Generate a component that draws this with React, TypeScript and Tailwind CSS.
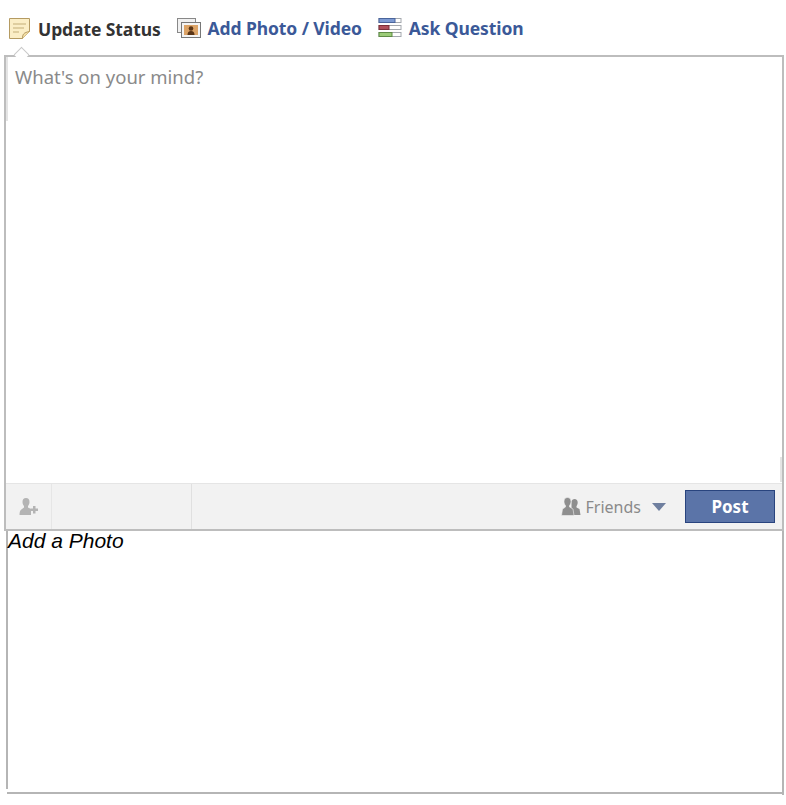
import React from 'react';

const NoteIcon = () => (
  <svg width="23" height="23" viewBox="0 0 23 23">
    <path d="M1.500 1.500h20v13l-7 7h-13z" fill="#fbeec6" stroke="#b59b62" />
    <path d="M14.500 21.500c0-4 1-6 7-7" fill="#f3dfa6" stroke="#b59b62" />
    <path d="M5 7h13M5 11h11M5 15h6" stroke="#c4ad78" strokeWidth="1.200" />
  </svg>
);

const PhotoIcon = () => (
  <svg width="26" height="22" viewBox="0 0 26 22">
    <rect x="1.500" y="1.500" width="18" height="14" fill="#f1f1f1" stroke="#888" />
    <rect x="5.500" y="5.500" width="19" height="15" fill="#f4f4f4" stroke="#777" />
    <rect x="8" y="8" width="14" height="10" fill="#dca366" />
    <circle cx="15" cy="11.500" r="2.300" fill="#5a3516" />
    <path d="M11.500 18c0-2.500 1.200-4 3.500-4s3.500 1.500 3.500 4z" fill="#5a3516" />
  </svg>
);

const PollIcon = () => (
  <svg width="24" height="22" viewBox="0 0 24 22">
    <rect x="1" y="1.500" width="22" height="4" fill="#fff" stroke="#a4a8ae" />
    <rect x="1" y="1.500" width="16" height="4" fill="#7d9ad2" stroke="#4a659c" />
    <rect x="1" y="8.500" width="22" height="4" fill="#fff" stroke="#a4a8ae" />
    <rect x="1" y="8.500" width="10" height="4" fill="#b04f5a" stroke="#7d2f38" />
    <rect x="1" y="15.500" width="22" height="4" fill="#fff" stroke="#a4a8ae" />
    <rect x="1" y="15.500" width="13" height="4" fill="#9ccc78" stroke="#5f8b45" />
  </svg>
);

const TagIcon = () => (
  <svg width="21" height="19" viewBox="0 0 21 19" fill="#b4b4b4">
    <path d="M8 1c2.300 0 3.500 1.600 3.500 4 0 1.800-.7 3.200-1.500 4v1.500l3 1.500v6H1.500c0-3 .5-5 2.500-6l2-1.500V9c-.8-.8-1.500-2.200-1.500-4 0-2.400 1.200-4 3.500-4z" />
    <path d="M15 9h2.500v2.500H20V14h-2.500v2.500H15V14h-2.500v-2.500H15z" />
  </svg>
);

const FriendsIcon = () => (
  <svg width="20" height="19" viewBox="0 0 20 19" fill="#8f8f8f">
    <path d="M13.500 2c2 0 3.200 1.400 3.200 3.500 0 1.600-.6 2.800-1.200 3.500v1.500l3 1.500 1 6h-8l-1-7V4c.8-1.200 1.700-2 3-2z" />
    <path d="M6.500 .5c2.300 0 3.500 1.600 3.500 4 0 1.800-.7 3.200-1.500 4V10l3.500 2 1 6.500H0.500l1-6.500 3-2V8.500C3.700 7.700 3 6.300 3 4.500c0-2.400 1.200-4 3.500-4z" stroke="#f2f2f2" strokeWidth="0.600" />
  </svg>
);

export default function App() {
  return (
    <div className="w-[786px] h-[805px] bg-white overflow-hidden font-['Noto_Sans',sans-serif]">
      {/* tab row */}
      <div className="h-[55px] pl-[8px] pt-[17px] flex items-start text-[17.500px] font-bold leading-[22px] tracking-[-0.100px]">
        <div className="flex items-center gap-[7px] text-[#333333]">
          <NoteIcon />
          <span>Update Status</span>
        </div>
        <div className="flex items-center gap-[6px] ml-[15px] text-[#3b5998]">
          <PhotoIcon />
          <span>Add Photo / Video</span>
        </div>
        <div className="flex items-center gap-[7px] ml-[16px] text-[#3b5998]">
          <PollIcon />
          <span>Ask Question</span>
        </div>
      </div>

      {/* composer */}
      <div className="relative ml-[4px] w-[780px] h-[476px] flex flex-col border-2 border-[#bdbdbd]">
        <div className="absolute left-[10px] top-[-8px] w-[11px] h-[11px] rotate-45 bg-white border-l border-t border-[#c8c8c8]" />
        <div className="absolute left-0 top-0 w-[2px] h-[64px] bg-[#e4e4e4]" />
        <div className="absolute right-0 bottom-[47px] w-[2px] h-[25px] bg-[#e4e4e4]" />
        <div className="flex-1 pl-[9px] pt-[7px] text-[18.500px] leading-[26px] text-[#8a8a8a]">What's on your mind?</div>
        <div className="h-[46px] bg-[#f2f2f2] border-t border-[#e5e5e5] flex items-center">
          <div className="w-[46px] h-full flex items-center justify-center border-r border-[#e6e6e6]">
            <TagIcon />
          </div>
          <div className="w-[140px] h-full border-r border-[#e0e0e0]" />
          <div className="ml-auto flex items-center gap-[5px] text-[#8a8a8a] text-[16px]">
            <FriendsIcon />
            <span>Friends</span>
            <span className="ml-[6px] w-0 h-0 border-x-[7px] border-t-[8px] border-x-transparent border-t-[#6f7f9f]" />
          </div>
          <button className="ml-[19px] mr-[7px] w-[90px] h-[33px] bg-[#5b74a8] border border-[#29447e] text-white text-[17px] font-bold">
            Post
          </button>
        </div>
      </div>

      {/* add a photo */}
      <div className="ml-[6px] w-[778px] h-[264px] border-r-2 border-[#b5b5b5]">
        <div className="h-[258px] border-l-2 border-[#b5b5b5]">
          <div className="font-['Liberation_Sans',sans-serif] italic text-[21px] leading-[20px] text-black">Add a Photo</div>
        </div>
        <div className="mt-[3px] ml-[1px] h-[2px] bg-[#b5b5b5]" />
      </div>
    </div>
  );
}
